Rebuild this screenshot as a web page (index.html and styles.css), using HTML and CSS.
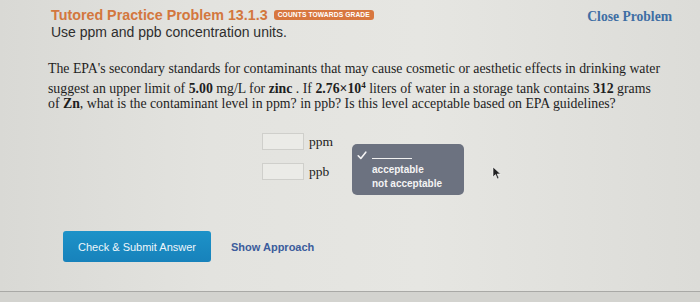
FILE: index.html
```html
<!DOCTYPE html>
<html>
<head>
<meta charset="utf-8">
<link rel="stylesheet" href="styles.css">
</head>
<body>
<div class="page">
  <header class="head">
    <div class="head-left">
      <div class="title-row">
        <span class="title">Tutored Practice Problem 13.1.3</span>
        <span class="badge">COUNTS TOWARDS GRADE</span>
      </div>
      <div class="subtitle">Use ppm and ppb concentration units.</div>
    </div>
    <a class="close">Close Problem</a>
  </header>

  <p class="problem">The EPA's secondary standards for contaminants that may cause cosmetic or aesthetic effects in drinking water<br>suggest an upper limit of <b>5.00</b> mg/L for <b>zinc</b> . If <b>2.76&times;10<sup>4</sup></b> liters of water in a storage tank contains <b>312</b> grams<br>of <b>Zn</b>, what is the contaminant level in ppm? in ppb? Is this level acceptable based on EPA guidelines?</p>

  <div class="answers">
    <div class="fields">
      <div class="field"><span class="box"></span><span class="unit">ppm</span></div>
      <div class="field"><span class="box"></span><span class="unit">ppb</span></div>
    </div>
    <div class="select-wrap">
      <div class="menu">
        <div class="opt sel"><svg class="check" width="10" height="9" viewBox="0 0 10 9"><path d="M1.2 4.8 L3.8 7.4 L8.8 1.2" fill="none" stroke="#f4f4f4" stroke-width="1.6" stroke-linecap="round" stroke-linejoin="round"/></svg><span class="blank"></span></div>
        <div class="opt">acceptable</div>
        <div class="opt">not acceptable</div>
      </div>
      <svg class="cursor" width="10" height="14" viewBox="0 0 10 14"><path d="M1 1 L1 11 L3.5 8.6 L5.4 13 L7 12.3 L5.2 8 L8.6 8 Z" fill="#222" stroke="#fff" stroke-width="0.6"/></svg>
    </div>
  </div>

  <div class="actions">
    <button class="submit">Check &amp; Submit Answer</button>
    <a class="approach">Show Approach</a>
  </div>
</div>
<div class="footer-line"></div>
</body>
</html>
```

FILE: styles.css
```css
html, body {
  margin: 0;
  padding: 0;
}
body {
  width: 700px;
  height: 302px;
  overflow: hidden;
  background: linear-gradient(90deg, #d9d9d5 0%, #e3e3df 30%, #e6e6e2 60%, #dcdcd8 100%);
  font-family: "Liberation Sans", Arial, sans-serif;
  position: relative;
}
.page {
  padding: 6px 28px 0 51px;
  height: 285px;
  box-sizing: border-box;
}
.head {
  display: flex;
  justify-content: space-between;
  align-items: flex-start;
}
.title-row {
  display: flex;
  align-items: center;
  gap: 6px;
}
.title {
  color: #d3773e;
  font-weight: bold;
  font-size: 14.3px;
  line-height: 18px;
}
.badge {
  background: #d8773f;
  color: #fff;
  font-weight: bold;
  font-size: 6.7px;
  line-height: 10px;
  padding: 0 4px;
  border-radius: 3px;
  letter-spacing: 0.1px;
}
.subtitle {
  color: #2e2e2e;
  font-size: 14px;
  line-height: 17px;
  margin-top: 0px;
}
.close {
  font-family: "Liberation Serif", "Times New Roman", serif;
  font-weight: bold;
  font-size: 13.6px;
  color: #3e6ea4;
  margin-top: 3px;
}
.problem {
  font-family: "Liberation Serif", "Times New Roman", serif;
  color: #1e1e1e;
  font-size: 13.8px;
  line-height: 15px;
  margin: 20px 0 0 -3px;
  width: 640px;
  white-space: nowrap;
}
.problem sup {
  font-size: 9px;
  vertical-align: 5px;
  line-height: 19px;
}
.answers {
  display: flex;
  margin-left: 211px;
  margin-top: 22px;
  gap: 19px;
}
.fields {
  display: flex;
  flex-direction: column;
  gap: 13px;
}
.field {
  display: flex;
  align-items: center;
  gap: 5px;
}
.box {
  width: 40px;
  height: 15px;
  background: #ebebe7;
  border: 1px solid #cfcfcb;
}
.unit {
  font-family: "Liberation Serif", "Times New Roman", serif;
  font-size: 13.5px;
  color: #222;
}
.select-wrap {
  position: relative;
  width: 160px;
  height: 60px;
}
.menu {
  position: absolute;
  left: 0;
  top: 11px;
  width: 112px;
  height: 51px;
  box-sizing: border-box;
  background: #6c7280;
  border-radius: 5px;
  padding: 6px 0 0 20px;
  color: #f4f4f4;
  font-size: 10px;
  font-weight: bold;
  line-height: 13.5px;
}
.opt.sel {
  position: relative;
  height: 13px;
}
.check {
  position: absolute;
  left: -15px;
  top: 1px;
}
.blank {
  position: absolute;
  left: 0;
  top: 8px;
  width: 40px;
  border-top: 1px solid #f0f0f0;
}
.cursor {
  position: absolute;
  left: 140px;
  top: 33px;
}
.actions {
  display: flex;
  align-items: center;
  gap: 20px;
  margin-top: 38px;
  margin-left: 12px;
}
.submit {
  width: 148px;
  height: 31px;
  background: linear-gradient(#1d92c8, #1782bb);
  border: none;
  border-radius: 3px;
  color: #eef6fb;
  font-family: "Liberation Sans", Arial, sans-serif;
  font-size: 11px;
  padding: 0;
}
.approach {
  font-weight: bold;
  font-size: 11px;
  color: #3b5c9c;
}
.footer-line {
  position: absolute;
  left: 0;
  right: 0;
  top: 291px;
  height: 11px;
  border-top: 1px solid #a9a9a6;
  background: #d3d3cf;
}
```
